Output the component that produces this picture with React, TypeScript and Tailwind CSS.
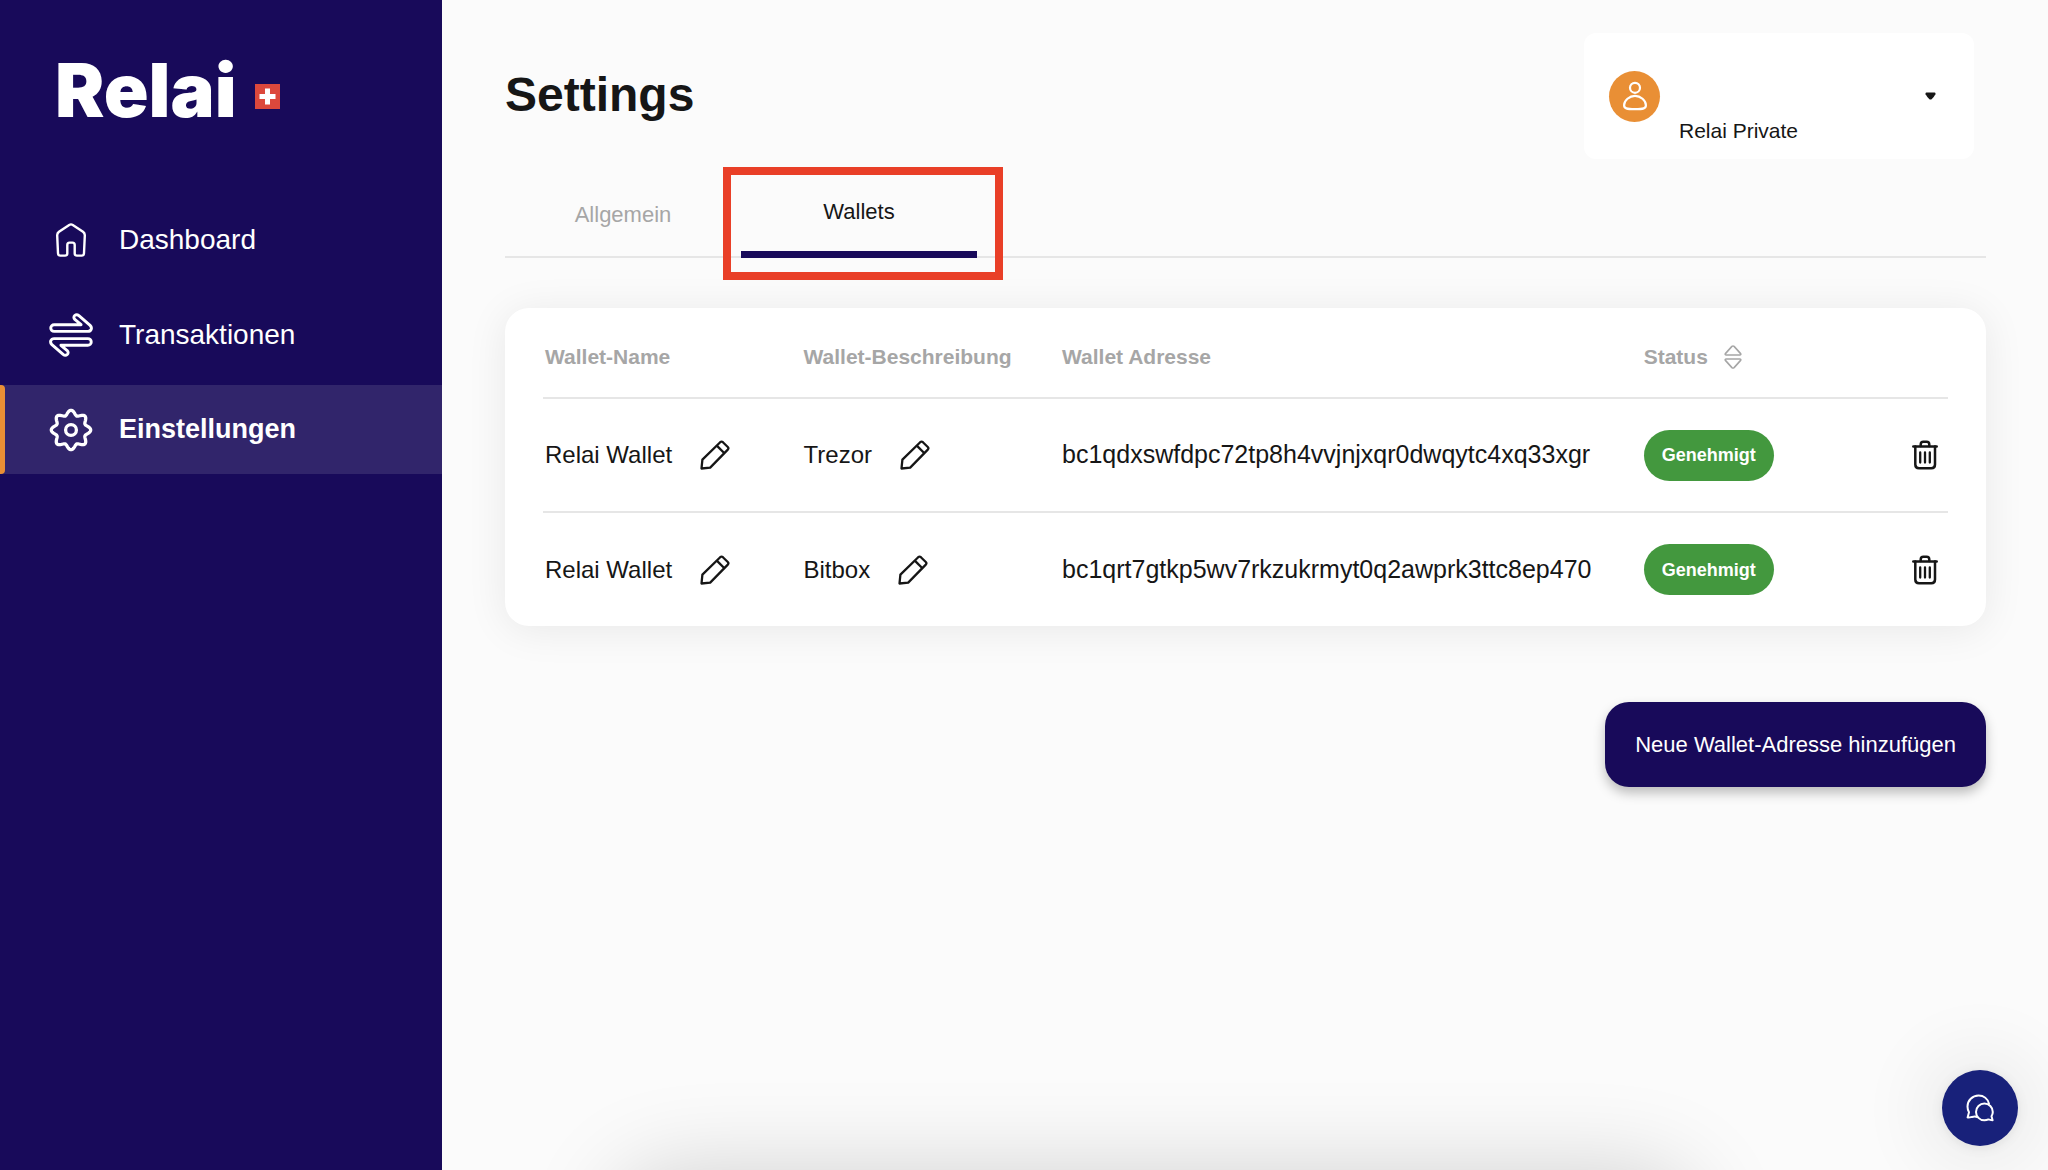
import { useState } from "react";
import clsx from "clsx";

const wallets = [
  {
    name: "Relai Wallet",
    description: "Trezor",
    address: "bc1qdxswfdpc72tp8h4vvjnjxqr0dwqytc4xq33xgr",
    status: "Genehmigt",
  },
  {
    name: "Relai Wallet",
    description: "Bitbox",
    address: "bc1qrt7gtkp5wv7rkzukrmyt0q2awprk3ttc8ep470",
    status: "Genehmigt",
  },
];

const tabs = ["Allgemein", "Wallets"];

// eight soft teeth around the centre of a 44x44 box
const gearPath =
  Array.from({ length: 160 }, (_, i) => {
    const a = (i / 160) * Math.PI * 2;
    const r = 17.4 + 2.3 * Math.cos(8 * a);
    return `${i ? "L" : "M"}${(22 + r * Math.cos(a)).toFixed(2)} ${(22 + r * Math.sin(a)).toFixed(2)}`;
  }).join("") + "Z";

function HomeIcon() {
  return (
    <svg width="30" height="34" viewBox="0 0 30 34" fill="none" stroke="currentColor" strokeWidth="2.4">
      <path d="M13.2 1.9 3 8.8Q1.1 10.2 1.2 12.6L2 30.2Q2.1 32.6 4.3 32.6H9Q11.3 32.6 11.3 30.4V22Q11.3 19.6 13.5 19.6H16.5Q18.7 19.6 18.7 22V30.4Q18.7 32.6 21 32.6H25.7Q27.9 32.6 28 30.2L28.8 12.6Q28.9 10.2 27 8.8L16.8 1.9Q15 .8 13.2 1.9Z" />
    </svg>
  );
}

function TransferIcon() {
  const half =
    "M4.6 11.7H31.6L25.3 6.4C22.6 3.6 26.4 .2 29.4 2.6L40.6 12.4C43.2 15 41.6 18.4 38.4 18.4H4.6A3.35 3.35 0 0 1 4.6 11.7Z";
  return (
    <svg width="44" height="44" viewBox="0 0 43 44" fill="none" stroke="currentColor" strokeWidth="2.9" strokeLinejoin="round">
      <path d={half} />
      <path d={half} transform="rotate(180 21.5 22)" />
    </svg>
  );
}

function GearIcon() {
  return (
    <svg width="44" height="44" viewBox="0 0 44 44" fill="none" stroke="currentColor" strokeWidth="3.3">
      <path d={gearPath} strokeLinejoin="round" />
      <circle cx="22" cy="22" r="5.4" />
    </svg>
  );
}

function PencilIcon() {
  return (
    <svg width="30" height="30" viewBox="0 0 30 30" fill="none" stroke="currentColor" strokeWidth="2.3" strokeLinejoin="round">
      <path d="M1.5 28.5 2.4 19.6 20.2 2.2Q21.6 1 22.9 2.2L27.8 7Q29 8.2 27.8 9.6L10.2 27.6Z" />
      <path d="m16.8 5.6 7.6 7.6" />
    </svg>
  );
}

function TrashIcon() {
  return (
    <svg width="26" height="30" viewBox="0 0 26 30" fill="none" stroke="currentColor" strokeWidth="2.5" strokeLinecap="round">
      <path d="M1.3 6.4H24.7" />
      <path d="M8.7 6V4.4Q8.7 1.7 11.4 1.7H14.6Q17.3 1.7 17.3 4.4V6" />
      <path d="M3.3 6.6V24.6Q3.3 28.3 7 28.3H19.4Q23 28.3 23 24.6V6.6" />
      <path d="M8.2 12.4V22.6M13 12.4V22.6M17.8 12.4V22.6" strokeWidth="2.3" />
    </svg>
  );
}

function SortIcon() {
  return (
    <svg width="18" height="24" viewBox="0 0 18 24" fill="none" stroke="currentColor" strokeWidth="1.6" strokeLinejoin="round">
      <path d="M7.9 1.4 1.4 8.6Q.8 10 2.2 10H15.8Q17.2 10 16.6 8.6L10.1 1.4Q9 .6 7.9 1.4Z" />
      <path d="M7.9 22.6 1.4 15.4Q.8 14 2.2 14H15.8Q17.2 14 16.6 15.4L10.1 22.6Q9 23.4 7.9 22.6Z" />
    </svg>
  );
}

function UserIcon() {
  return (
    <svg width="24" height="30" viewBox="0 0 24 30" fill="none" stroke="currentColor" strokeWidth="2.2">
      <circle cx="12" cy="6.8" r="5" />
      <path d="M12 14.8C17.6 14.8 22.9 19.6 22.9 24.2C22.9 27.4 20.6 28.2 12 28.2C3.4 28.2 1.1 27.4 1.1 24.2C1.1 19.6 6.4 14.8 12 14.8Z" />
    </svg>
  );
}

function ChatIcon() {
  return (
    <svg width="28" height="28" viewBox="0 0 28 28" fill="none" stroke="currentColor" strokeWidth="2" strokeLinejoin="round" strokeLinecap="round">
      <path d="M23 9.8C21.8 4.6 17.6 1.5 12.6 1.5C6.4 1.5 1.5 6.4 1.5 12.6C1.5 14.8 2 16.6 3 18.3L1.6 23.4Q2.4 23.8 6 22.9C8 22.5 9.6 22.4 11.2 23" />
      <path d="M26.6 26.2 25.5 22.2C26.4 20.8 26.8 19.4 26.8 17.9A8.4 8.4 0 1 0 18.4 26.3C19.9 26.3 21.2 26 22.4 25.4C24 25.8 25.2 26.2 26.6 26.2Z" />
    </svg>
  );
}

const nav = [
  { label: "Dashboard", icon: HomeIcon },
  { label: "Transaktionen", icon: TransferIcon },
  { label: "Einstellungen", icon: GearIcon, active: true },
];

function Sidebar() {
  return (
    <aside className="w-[442px] shrink-0 bg-[#180a5a] text-white">
      <a href="#" className="flex h-[195px] items-start justify-between pt-[46px] pr-[162px] pl-[55px]">
        <span className="font-['Inter',sans-serif] text-[74px] leading-[88px] font-black">Relai</span>
        <svg width="25" height="25" viewBox="0 0 25 25" className="mt-[38px] shrink-0">
          <path d="M0 0H25V25H0Z" fill="#dc483c" />
          <path d="M10 4.5H15V10H20.5V15H15V20.5H10V15H4.5V10H10Z" fill="#fff" />
        </svg>
      </a>
      <nav className="flex flex-col gap-1.5">
        {nav.map(({ label, icon: Icon, active }) => (
          <a
            key={label}
            href="#"
            className={clsx(
              "relative flex h-[89px] items-center gap-[26px] pl-[49px]",
              active ? "bg-[#31256b] text-[27px] font-bold" : "text-[28px]"
            )}
          >
            {active && <span className="absolute inset-y-0 left-0 w-[5px] rounded-r-sm bg-[#e98f35]" />}
            <span className="flex w-11 justify-center">
              <Icon />
            </span>
            {label}
          </a>
        ))}
      </nav>
    </aside>
  );
}

function EditableCell({ value, label }: { value: string; label: string }) {
  return (
    <div className="flex items-center gap-7">
      {value}
      <button type="button" aria-label={label}>
        <PencilIcon />
      </button>
    </div>
  );
}

function WalletTable() {
  return (
    <div className="mt-[50px] rounded-3xl bg-white px-[38px] shadow-[0_4px_40px_rgba(0,0,0,0.08)]">
      <table className="w-full table-fixed text-left">
        <colgroup>
          <col className="w-[18.4%]" />
          <col className="w-[18.4%]" />
          <col className="w-[41.4%]" />
          <col />
          <col className="w-[60px]" />
        </colgroup>
        <thead>
          <tr className="h-[90px] border-b-2 border-[#e6e6e6] text-[21px] text-[#a6a6a6]">
            <th className="px-0.5 pt-2 font-bold">Wallet-Name</th>
            <th className="px-0.5 pt-2 font-bold">Wallet-Beschreibung</th>
            <th className="px-0.5 pt-2 font-bold">Wallet Adresse</th>
            <th className="px-0.5 pt-2 font-bold">
              <button type="button" className="flex items-center gap-4">
                Status
                <SortIcon />
              </button>
            </th>
            <td />
          </tr>
        </thead>
        <tbody>
          {wallets.map((w) => (
            <tr key={w.address} className="h-[114px] border-b-2 border-[#e6e6e6] text-2xl last:border-0">
              <td className="px-0.5">
                <EditableCell value={w.name} label="Wallet-Name bearbeiten" />
              </td>
              <td className="px-0.5">
                <EditableCell value={w.description} label="Wallet-Beschreibung bearbeiten" />
              </td>
              <td className="px-0.5 text-[25px]">{w.address}</td>
              <td className="px-0.5">
                <span className="flex h-[51px] w-fit items-center rounded-full bg-[#43983e] px-[18px] text-lg font-bold text-white">
                  {w.status}
                </span>
              </td>
              <td className="pr-2.5">
                <button type="button" aria-label="Wallet löschen" className="ml-auto block">
                  <TrashIcon />
                </button>
              </td>
            </tr>
          ))}
        </tbody>
      </table>
    </div>
  );
}

export default function App() {
  const [tab, setTab] = useState("Wallets");

  return (
    <div className="relative flex min-h-screen overflow-hidden bg-[#fbfbfb] font-['Liberation_Sans',Arial,sans-serif] text-[#161616]">
      <Sidebar />

      <main className="flex min-w-0 flex-1 flex-col pr-[62px] pl-[63px]">
        <header className="flex items-start justify-between pt-[33px]">
          <h1 className="pt-8 text-5xl leading-[60px] font-bold">Settings</h1>
          <button
            type="button"
            className="mr-3 flex h-[126px] w-[390px] items-center rounded-xl bg-white pr-[38px] pl-[25px] text-left"
          >
            <span className="flex size-[51px] items-center justify-center rounded-full bg-[#e98f35] text-white">
              <UserIcon />
            </span>
            <span className="flex-1 self-end pb-3.5 pl-[19px] text-[21px] leading-7">Relai Private</span>
            <svg width="11" height="8" viewBox="0 0 11 8">
              <path d="M1.4 .4H9.6Q11 .6 10.4 2.2Q9 5 6.6 7.2Q5.5 8 4.4 7.2Q2 5 .6 2.2Q0 .6 1.4 .4Z" fill="currentColor" />
            </svg>
          </button>
        </header>

        <div role="tablist" className="mt-3 flex h-[87px] border-b-2 border-[#e6e6e6]">
          {tabs.map((t) => (
            <div key={t} className="relative -mb-0.5 flex w-[236px]">
              <button
                type="button"
                role="tab"
                aria-selected={t === tab}
                onClick={() => setTab(t)}
                className={clsx(
                  "flex-1 text-[22px]",
                  t === tab ? "border-b-[7px] border-[#180a5a]" : "text-[#a6a6a6]"
                )}
              >
                {t}
              </button>
              {t === "Wallets" && (
                <span className="pointer-events-none absolute -top-1 -right-[26px] -bottom-[22px] -left-[18px] border-8 border-[#e93f27]" />
              )}
            </div>
          ))}
        </div>

        <WalletTable />

        <button
          type="button"
          className="mt-[76px] h-[85px] self-end rounded-3xl bg-[#180a5a] px-[30px] text-[22px] text-white shadow-[0_6px_12px_rgba(0,0,0,0.25)]"
        >
          Neue Wallet-Adresse hinzufügen
        </button>
      </main>

      {/* glow of the sheet parked below the viewport */}
      <div className="absolute top-full right-[352px] left-[614px] h-40 rounded-[60px] shadow-[0_0_90px_rgba(0,0,0,0.17)]" />

      <button
        type="button"
        aria-label="Chat öffnen"
        className="absolute right-[30px] bottom-6 flex size-[76px] items-center justify-center rounded-full bg-[#18217a] text-white shadow-[0_2px_12px_rgba(0,0,0,0.08),0_2px_70px_24px_rgba(0,0,0,0.06)]"
      >
        <ChatIcon />
      </button>
    </div>
  );
}
